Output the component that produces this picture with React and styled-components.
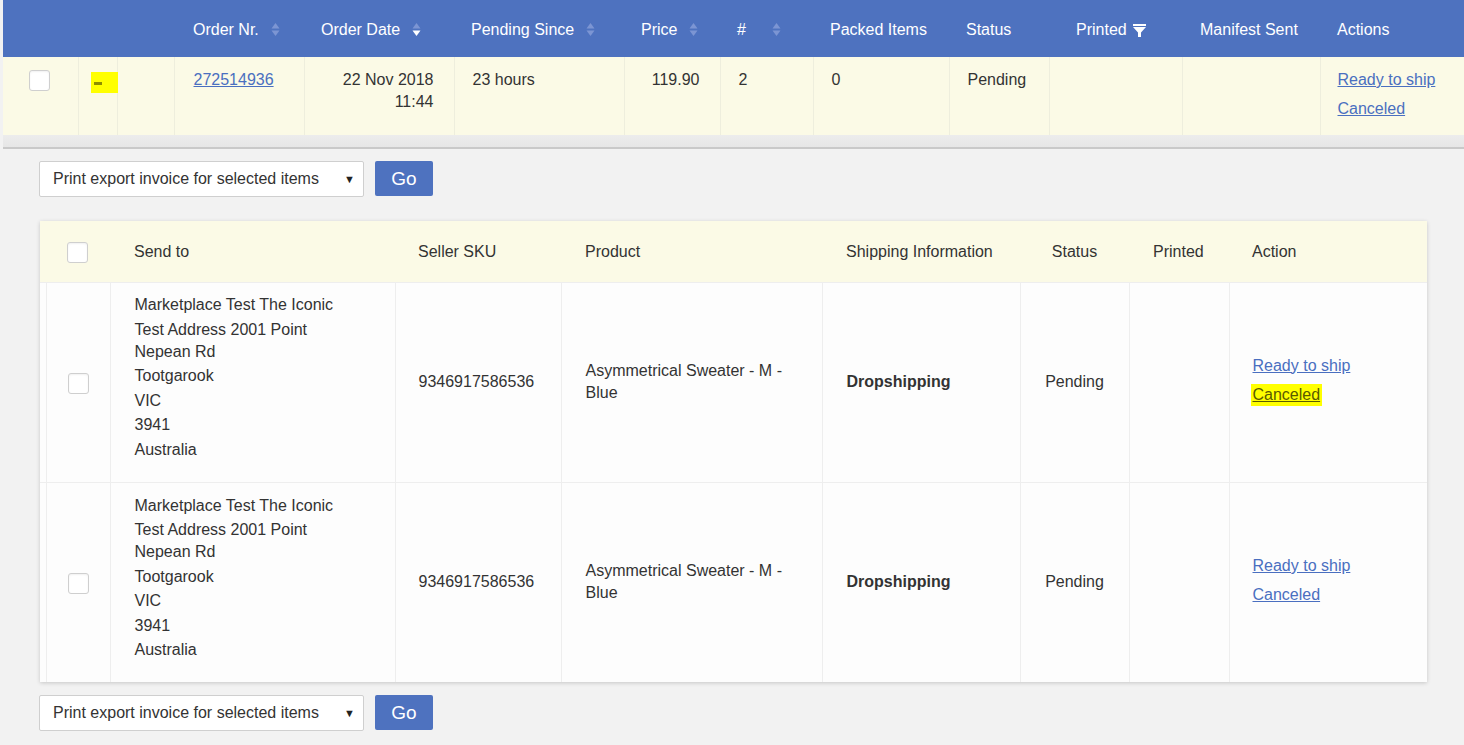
import React from "react";
import styled, { createGlobalStyle } from "styled-components";

const GlobalStyle = createGlobalStyle`
  html, body {
    margin: 0;
    padding: 0;
    background: #f2f2f2;
    font-family: "Liberation Sans", Arial, sans-serif;
    font-size: 16px;
    color: #333;
  }
`;

const Page = styled.div`
  padding-left: 3px;
  min-height: 745px;
`;

const OrderTable = styled.table`
  width: 1461px;
  border-collapse: collapse;
  table-layout: fixed;
`;

const HeadRow = styled.tr`
  background: #4e72bf;
  height: 57px;
`;

const HeadCell = styled.th`
  color: #fff;
  font-weight: normal;
  text-align: left;
  padding: 2px 0 0 ${(p) => (p.$pad != null ? p.$pad : 19)}px;
  white-space: nowrap;
  vertical-align: middle;
`;

const HeadInner = styled.span`
  display: inline-flex;
  align-items: center;
`;

const OrderRow = styled.tr`
  background: #fbfae6;
  height: 78px;
`;

const OrderCell = styled.td`
  vertical-align: top;
  padding: 12px ${(p) => (p.$right ? 20 : 19)}px 0 ${(p) => (p.$pad != null ? p.$pad : 19)}px;
  line-height: 22px;
  text-align: ${(p) => (p.$right ? "right" : "left")};
  border-left: 1px solid #eeeedd;
  &:first-child {
    border-left: none;
  }
`;

const Strip = styled.div`
  height: 12px;
  background: linear-gradient(#ececec, #e6e6e6);
  border-bottom: 2px solid #c9c9c9;
`;

const Toolbar = styled.div`
  display: flex;
  gap: 11px;
  margin: ${(p) => p.$margin};
  padding-left: 36px;
`;

const SelectBox = styled.div`
  width: 325px;
  height: 36px;
  box-sizing: border-box;
  background: #fff;
  border: 1px solid #cfcfcf;
  border-radius: 2px;
  display: flex;
  align-items: center;
  justify-content: space-between;
  padding: 0 8px 0 13px;
  color: #333;
`;

const Caret = styled.span`
  font-size: 11px;
  color: #222;
`;

const GoButton = styled.button`
  width: 58px;
  height: 35px;
  border: none;
  border-radius: 2px;
  background: #4e72bf;
  color: #fff;
  font-family: "Liberation Sans", Arial, sans-serif;
  font-size: 19px;
  padding: 0;
`;

const Card = styled.div`
  margin-left: 37px;
  width: 1387px;
  background: #fdfdfd;
  box-shadow: 0 1px 4px rgba(0, 0, 0, 0.18);
`;

const ItemTable = styled.table`
  width: 100%;
  border-collapse: collapse;
  table-layout: fixed;
`;

const ItemHeadRow = styled.tr`
  background: #fbfae6;
  height: 61px;
`;

const ItemHeadCell = styled.th`
  font-weight: normal;
  text-align: ${(p) => (p.$center ? "center" : "left")};
  padding: 2px 0 0 ${(p) => (p.$pad != null ? p.$pad : 24)}px;
  color: #333;
  vertical-align: middle;
`;

const ItemRow = styled.tr`
  height: 200px;
  border-top: 1px solid #eee;
`;

const ItemCell = styled.td`
  vertical-align: middle;
  text-align: ${(p) => (p.$center ? "center" : "left")};
  padding: 0 ${(p) => (p.$center ? 0 : p.$padRight || 20)}px ${(p) => p.$padBottom || 0}px
    ${(p) => (p.$pad != null ? p.$pad : 24)}px;
  border-left: 1px solid #eee;
  line-height: 22px;
  font-weight: ${(p) => (p.$bold ? "bold" : "normal")};
  &:first-child {
    border-left: none;
  }
`;

const AddressLine = styled.div`
  margin-bottom: 2.5px;
  &:last-child {
    margin-bottom: 0;
  }
`;

const Check = styled.span`
  display: inline-block;
  width: 19px;
  height: 19px;
  background: #fff;
  border: 1px solid #cfcfcf;
  border-radius: 3px;
  box-shadow: inset 0 1px 2px rgba(0, 0, 0, 0.06);
  vertical-align: middle;
`;

const CheckWrap = styled.div`
  padding-top: ${(p) => p.$top || 0}px;
  padding-left: ${(p) => p.$left || 0}px;
  line-height: 0;
`;

const LinkStack = styled.div`
  display: flex;
  flex-direction: column;
  align-items: flex-start;
  gap: 7px;
`;

const Link = styled.a`
  text-decoration: underline;
  line-height: 22px;
  cursor: pointer;
  padding: ${(p) => (p.$marked ? "0 2px" : "0")};
  margin-left: ${(p) => (p.$marked ? "-2px" : "0")};
  background: ${(p) => (p.$marked ? "#ffff00" : "transparent")};
  color: ${(p) => (p.$marked ? "#5a5a00" : "#4a6fc0")};
`;

const Marker = styled.span`
  display: inline-flex;
  align-items: center;
  justify-content: flex-start;
  width: 27px;
  height: 21px;
  background: #ffff00;
  margin-top: -5px;
  padding-left: 3px;
  box-sizing: border-box;
`;

const Dash = styled.span`
  display: block;
  width: 8px;
  height: 3px;
  background: #8e8e00;
  margin-top: 2px;
`;

const SortIcon = ({ active, gap = 12 }) => (
  <svg width="9" height="17" viewBox="0 0 9 17" style={{ marginLeft: gap }}>
    <polygon points="0.5,7.5 4.5,2 8.5,7.5" fill="#7c95d3" />
    <polygon points="0.5,9.5 4.5,15 8.5,9.5" fill={active ? "#ffffff" : "#7c95d3"} />
  </svg>
);

const FilterIcon = () => (
  <svg width="13" height="16" viewBox="0 0 13 16" style={{ marginLeft: 6 }}>
    <rect x="0" y="2" width="13" height="2" fill="#fff" />
    <polygon points="0,5 13,5 8,10.5 8,15 5,15 5,10.5" fill="#fff" />
  </svg>
);

const orderCols = [75, 39, 57, 130, 150, 170, 96, 93, 136, 100, 133, 138, 144];
const itemCols = [6, 64, 285, 166, 261, 198, 109, 100, 198];

const address = [
  "Marketplace Test The Iconic",
  "Test Address 2001 Point Nepean Rd",
  "Tootgarook",
  "VIC",
  "3941",
  "Australia",
];

const items = [{ marked: true }, { marked: false }];

const BulkBar = ({ margin }) => (
  <Toolbar $margin={margin}>
    <SelectBox>
      <span>Print export invoice for selected items</span>
      <Caret>▼</Caret>
    </SelectBox>
    <GoButton>Go</GoButton>
  </Toolbar>
);

export default function App() {
  return (
    <Page>
      <GlobalStyle />
      <OrderTable>
        <colgroup>
          {orderCols.map((w, i) => (
            <col key={i} style={{ width: w }} />
          ))}
        </colgroup>
        <thead>
          <HeadRow>
            <HeadCell />
            <HeadCell />
            <HeadCell />
            <HeadCell>
              <HeadInner>Order Nr.<SortIcon /></HeadInner>
            </HeadCell>
            <HeadCell $pad={17}>
              <HeadInner>Order Date<SortIcon active /></HeadInner>
            </HeadCell>
            <HeadCell $pad={17}>
              <HeadInner>Pending Since<SortIcon /></HeadInner>
            </HeadCell>
            <HeadCell $pad={17}>
              <HeadInner>Price<SortIcon /></HeadInner>
            </HeadCell>
            <HeadCell $pad={17}>
              <HeadInner>#<SortIcon gap={26} /></HeadInner>
            </HeadCell>
            <HeadCell $pad={17}>Packed Items</HeadCell>
            <HeadCell $pad={17}>Status</HeadCell>
            <HeadCell $pad={27}>
              <HeadInner>Printed<FilterIcon /></HeadInner>
            </HeadCell>
            <HeadCell $pad={18}>Manifest Sent</HeadCell>
            <HeadCell $pad={17}>Actions</HeadCell>
          </HeadRow>
        </thead>
        <tbody>
          <OrderRow>
            <OrderCell>
              <CheckWrap $top={1} $left={7}>
                <Check />
              </CheckWrap>
            </OrderCell>
            <OrderCell $pad={12} style={{ paddingRight: 0 }}>
              <Marker>
                <Dash />
              </Marker>
            </OrderCell>
            <OrderCell />
            <OrderCell>
              <Link>272514936</Link>
            </OrderCell>
            <OrderCell $right>
              22 Nov 2018
              <br />
              11:44
            </OrderCell>
            <OrderCell $pad={18}>23 hours</OrderCell>
            <OrderCell $right>119.90</OrderCell>
            <OrderCell $pad={18}>2</OrderCell>
            <OrderCell $pad={18}>0</OrderCell>
            <OrderCell $pad={18}>Pending</OrderCell>
            <OrderCell />
            <OrderCell />
            <OrderCell $pad={17}>
              <LinkStack>
                <Link>Ready to ship</Link>
                <Link>Canceled</Link>
              </LinkStack>
            </OrderCell>
          </OrderRow>
        </tbody>
      </OrderTable>
      <Strip />
      <BulkBar margin="12px 0 24px 0" />
      <Card>
        <ItemTable>
          <colgroup>
            {itemCols.map((w, i) => (
              <col key={i} style={{ width: w }} />
            ))}
          </colgroup>
          <thead>
            <ItemHeadRow>
              <ItemHeadCell colSpan={2} $pad={27}>
                <CheckWrap>
                  <Check />
                </CheckWrap>
              </ItemHeadCell>
              <ItemHeadCell>Send to</ItemHeadCell>
              <ItemHeadCell $pad={23}>Seller SKU</ItemHeadCell>
              <ItemHeadCell>Product</ItemHeadCell>
              <ItemHeadCell>Shipping Information</ItemHeadCell>
              <ItemHeadCell $center $pad={0}>Status</ItemHeadCell>
              <ItemHeadCell>Printed</ItemHeadCell>
              <ItemHeadCell $pad={23}>Action</ItemHeadCell>
            </ItemHeadRow>
          </thead>
          <tbody>
            {items.map((item, i) => (
              <ItemRow key={i}>
                <ItemCell $pad={0} />
                <ItemCell $pad={21}>
                  <CheckWrap $top={2}>
                    <Check />
                  </CheckWrap>
                </ItemCell>
                <ItemCell $padRight={40} $padBottom={9}>
                  {address.map((line) => (
                    <AddressLine key={line}>{line}</AddressLine>
                  ))}
                </ItemCell>
                <ItemCell $pad={23}>9346917586536</ItemCell>
                <ItemCell>Asymmetrical Sweater - M - Blue</ItemCell>
                <ItemCell $bold>Dropshipping</ItemCell>
                <ItemCell $center $pad={0}>Pending</ItemCell>
                <ItemCell />
                <ItemCell $pad={23} $padBottom={4}>
                  <LinkStack>
                    <Link>Ready to ship</Link>
                    <Link $marked={item.marked}>Canceled</Link>
                  </LinkStack>
                </ItemCell>
              </ItemRow>
            ))}
          </tbody>
        </ItemTable>
      </Card>
      <BulkBar margin="13px 0 0 0" />
    </Page>
  );
}
